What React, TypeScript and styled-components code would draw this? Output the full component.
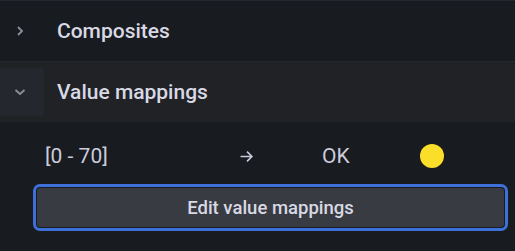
import React from "react";
import styled, { createGlobalStyle } from "styled-components";

const GlobalStyle = createGlobalStyle`
  body {
    margin: 0;
    background: #181b1f;
    font-family: Roboto, "Noto Sans", sans-serif;
    color: #ccccdc;
  }
`;

const mappings = [{ range: "[0 - 70]", text: "OK", color: "#fade2a" }];

const App = () => {
  return (
    <>
      <GlobalStyle />
      <Panel>
        <Header>
          <Chevron>
            <svg width="14" height="14" viewBox="0 0 14 14">
              <path d="M5 3 L9 7 L5 11" fill="none" stroke="#8e8e98" strokeWidth="1.8" />
            </svg>
          </Chevron>
          <Title>Composites</Title>
        </Header>
        <Header $open>
          <Chevron $open>
            <svg width="14" height="14" viewBox="0 0 14 14">
              <path d="M2.5 5 L7 9 L11.5 5" fill="none" stroke="#8e8e98" strokeWidth="1.8" />
            </svg>
          </Chevron>
          <Title>Value mappings</Title>
        </Header>
        <Body>
          {mappings.map((m) => (
            <MappingRow key={m.range}>
              <span>{m.range}</span>
              <Arrow>
                <svg width="13" height="13" viewBox="0 0 12 12">
                  <path d="M0.5 6 H11 M6.5 1.5 L11 6 L6.5 10.5" fill="none" stroke="#ccccdc" strokeWidth="1.5" />
                </svg>
              </Arrow>
              <span>{m.text}</span>
              <Dot $color={m.color} />
            </MappingRow>
          ))}
          <EditButton>Edit value mappings</EditButton>
        </Body>
      </Panel>
    </>
  );
};

export default App;

const Panel = styled.div`
  width: 515px;
  height: 251px;
  overflow: hidden;
`;

const Header = styled.div<{ $open?: boolean }>`
  display: flex;
  align-items: center;
  gap: 13px;
  height: 60px;
  border-top: 1px solid #24272d;
  background: ${({ $open }) => ($open ? "#202226" : "#181b1f")};
`;

const Chevron = styled.div<{ $open?: boolean }>`
  width: 44px;
  height: 48px;
  display: flex;
  align-items: center;
  justify-content: center;
  padding-right: 4px;
  box-sizing: border-box;
  border-radius: 0 4px 4px 0;
  background: ${({ $open }) => ($open ? "#24272e" : "transparent")};
`;

const Title = styled.div`
  font-size: 21px;
  font-weight: 500;
  color: #d8d9e4;
`;

const Body = styled.div`
  padding: 14px 11px 0 37px;
`;

const MappingRow = styled.div`
  display: grid;
  grid-template-columns: 195px 82px 98px 24px;
  align-items: center;
  height: 40px;
  padding-left: 8px;
  font-size: 21px;
  color: #ccccdc;
`;

const Arrow = styled.span`
  display: flex;
  align-items: center;
`;

const Dot = styled.span<{ $color: string }>`
  width: 24px;
  height: 24px;
  border-radius: 50%;
  background: ${({ $color }) => $color};
`;

const EditButton = styled.button`
  display: block;
  width: 100%;
  height: 39px;
  margin-top: 12px;
  border: none;
  border-radius: 3px;
  background: #393b42;
  color: #d8d9e4;
  font-family: Roboto, "Noto Sans", sans-serif;
  font-size: 18.5px;
  font-weight: 500;
  box-shadow: 0 0 0 1px #181b1f, 0 0 0 4px #3d71d9;
  cursor: pointer;
`;
